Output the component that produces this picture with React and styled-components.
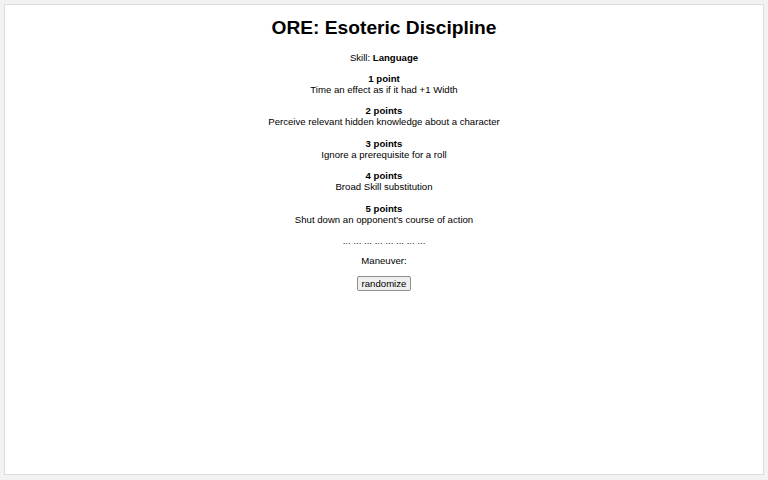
import React, { useState } from "react";
import styled, { createGlobalStyle } from "styled-components";

const GlobalStyle = createGlobalStyle`
  html, body {
    margin: 0;
    padding: 0;
    background: #f2f2f2;
  }
  body {
    font-family: "Liberation Sans", Arial, sans-serif;
    font-size: 9.6px;
    line-height: 11px;
    color: #000;
  }
`;

const Page = styled.div`
  padding: 4px 4px 5px 4px;
  height: 480px;
  box-sizing: border-box;
`;

const Panel = styled.main`
  height: 100%;
  box-sizing: border-box;
  background: #fff;
  border: 1px solid #dcdcdc;
  text-align: center;
  padding-top: 1px;
`;

const Title = styled.h1`
  font-size: 19.2px;
  line-height: 22px;
  font-weight: bold;
  margin: 11px 0 13px;
`;

const Para = styled.p`
  margin: 0 0 ${(p) => p.$gap || 10.5}px;
`;

const Points = styled.b`
  display: block;
`;

const Dots = styled.p`
  margin: 0 0 9px;
  font-size: 9.6px;
  color: #222;
`;

const Button = styled.button`
  font-family: "Liberation Sans", Arial, sans-serif;
  font-size: 9.6px;
  line-height: 11px;
  padding: 1px 4px;
  color: #000;
  background: #efefef;
  border: 1px solid #8f8f8f;
  border-radius: 2px;
`;

const effects = [
  ["1 point", "Time an effect as if it had +1 Width"],
  ["2 points", "Perceive relevant hidden knowledge about a character"],
  ["3 points", "Ignore a prerequisite for a roll"],
  ["4 points", "Broad Skill substitution"],
  ["5 points", "Shut down an opponent's course of action"],
];

export default function App() {
  const [maneuver, setManeuver] = useState("");

  return (
    <>
      <GlobalStyle />
      <Page>
        <Panel>
          <Title>ORE: Esoteric Discipline</Title>
          <Para $gap={9.5}>
            Skill: <b>Language</b>
          </Para>
          {effects.map(([pts, text]) => (
            <Para key={pts}>
              <Points>{pts}</Points>
              {text}
            </Para>
          ))}
          <Dots>... ... ... ... ... ... ... ...</Dots>
          <Para $gap={10}>Maneuver: {maneuver}</Para>
          <Button onClick={() => setManeuver("")}>randomize</Button>
        </Panel>
      </Page>
    </>
  );
}
